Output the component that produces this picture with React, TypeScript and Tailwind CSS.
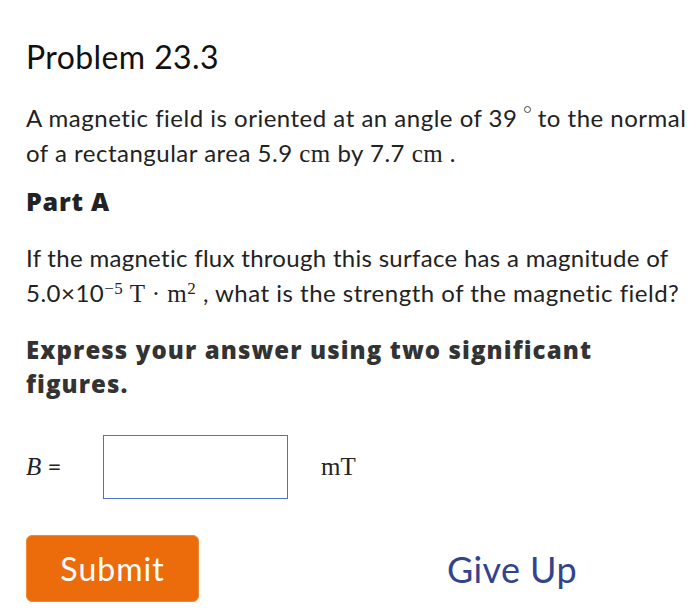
import React from 'react'

const sans = { fontFamily: 'Lato, "Open Sans", sans-serif' }
const bold = { fontFamily: '"Open Sans", Lato, sans-serif' }
const serif = { fontFamily: '"Liberation Serif", "DejaVu Serif", serif' }

function M({ children }: { children: React.ReactNode }) {
  return <span className="text-[25px]" style={serif}>{children}</span>
}

export default function App() {
  return (
    <div className="w-[700px] h-[613px] bg-white text-[#222] overflow-hidden" style={sans}>
      <div className="pl-[26px] pt-[37px]">
        <h1 className="text-[32px] leading-[40px] tracking-[0.4px] text-[#111]">Problem 23.3</h1>

        <p className="mt-[23px] text-[24px] leading-[35px] tracking-[0.5px] whitespace-nowrap">
          A magnetic field is oriented at an angle of 39{' '}
          <span className="inline-block w-[7px] h-[7px] rounded-full border-[1.5px] border-[#444] relative -top-[14px]" />{' '}
          to the normal
          <br />
          of a rectangular area 5.9 <M>cm</M> by 7.7 <M>cm</M> .
        </p>

        <h2 className="mt-[15px] text-[25px] leading-[30px] font-extrabold tracking-[0.8px] text-[#222]" style={bold}>
          Part A
        </h2>

        <p className="mt-[24px] text-[24px] leading-[35px] tracking-[0.3px] whitespace-nowrap">
          If the magnetic flux through this surface has a magnitude of
          <br />
          <span className="tracking-[0.5px]">
            5.0×10<sup className="text-[17px]" style={serif}>−5</sup>
            <M> T · m</M>
            <sup className="text-[17px]" style={serif}>2</sup> , what is the strength of the magnetic field?
          </span>
        </p>

        <p className="mt-[22px] text-[24px] leading-[34px] font-extrabold tracking-[1.1px] text-[#333] whitespace-nowrap" style={bold}>
          Express your answer using two significant
          <br />
          figures.
        </p>

        <div className="mt-[34px] flex items-center">
          <span className="text-[24px] w-[77px]">
            <span className="italic text-[25px]" style={serif}>B</span> =
          </span>
          <input
            className="w-[185px] h-[64px] border border-[#4a74c0] outline-none px-2 text-[22px]"
            aria-label="B"
          />
          <span className="ml-[33px] text-[25px]" style={serif}>mT</span>
        </div>

        <div className="mt-[36px] flex items-center">
          <button className="w-[173px] h-[67px] rounded-[6px] bg-[#ec6c0b] text-white text-[32px] tracking-[1px] border border-[#f08a3a]">
            Submit
          </button>
          <button className="ml-[248px] text-[36px] tracking-[0.4px] text-[#33438d]">Give Up</button>
        </div>
      </div>
    </div>
  )
}
